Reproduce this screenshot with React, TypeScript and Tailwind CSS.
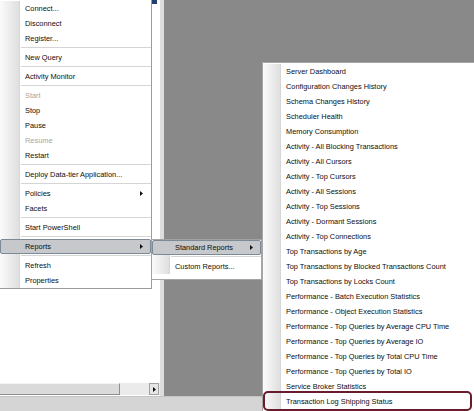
import React from 'react';

type Item = {
  label?: string;
  sep?: boolean;
  disabled?: boolean;
  sub?: boolean;
  active?: boolean;
};

const SEP: Item = { sep: true };

const serverMenu: Item[] = [
  { label: 'Connect...' },
  { label: 'Disconnect' },
  { label: 'Register...' },
  SEP,
  { label: 'New Query' },
  SEP,
  { label: 'Activity Monitor' },
  SEP,
  { label: 'Start', disabled: true },
  { label: 'Stop' },
  { label: 'Pause' },
  { label: 'Resume', disabled: true },
  { label: 'Restart' },
  SEP,
  { label: 'Deploy Data-tier Application...' },
  SEP,
  { label: 'Policies', sub: true },
  { label: 'Facets' },
  SEP,
  { label: 'Start PowerShell' },
  SEP,
  { label: 'Reports', sub: true, active: true },
  SEP,
  { label: 'Refresh' },
  { label: 'Properties' },
];

const reportsMenu: Item[] = [
  { label: 'Standard Reports', sub: true, active: true },
  SEP,
  { label: 'Custom Reports...' },
];

const standardReports: string[] = [
  'Server Dashboard',
  'Configuration Changes History',
  'Schema Changes History',
  'Scheduler Health',
  'Memory Consumption',
  'Activity - All Blocking Transactions',
  'Activity - All Cursors',
  'Activity - Top Cursors',
  'Activity - All Sessions',
  'Activity - Top Sessions',
  'Activity - Dormant Sessions',
  'Activity - Top Connections',
  'Top Transactions by Age',
  'Top Transactions by Blocked Transactions Count',
  'Top Transactions by Locks Count',
  'Performance - Batch Execution Statistics',
  'Performance - Object Execution Statistics',
  'Performance - Top Queries by Average CPU Time',
  'Performance - Top Queries by Average IO',
  'Performance - Top Queries by Total CPU Time',
  'Performance - Top Queries by Total IO',
  'Service Broker Statistics',
  'Transaction Log Shipping Status',
];

const Arrow = () => (
  <svg width="3" height="5" viewBox="0 0 3 5" className="shrink-0">
    <path d="M0 0L3 2.5L0 5Z" fill="#111" />
  </svg>
);

interface RowProps {
  item: Item;
  gutter: string;
}

const MenuRow: React.FC<RowProps> = ({ item, gutter }) => {
  if (item.sep) {
    return (
      <div className="flex h-[4px]">
        <div className={`${gutter} self-stretch bg-linear-to-r from-[#fbfbfb] to-[#dfdfdf] border-r border-[#d6d6d6]`} />
        <div className="flex-1 flex flex-col justify-center pl-[1px]">
          <div className="h-px bg-[#d5d5d5]" />
          <div className="h-px bg-white" />
        </div>
      </div>
    );
  }

  if (item.active) {
    return (
      <div className="flex items-center h-[15px] bg-[#c6c8cb] border border-[#7c8997] rounded-[2px]">
        <div className={`${gutter} self-stretch`} />
        <span className="pl-[4px] whitespace-nowrap">{item.label}</span>
        <span className="ml-auto mr-[7px]">
          <Arrow />
        </span>
      </div>
    );
  }

  return (
    <div className="flex items-center h-[15px]">
      <div className={`${gutter} self-stretch bg-linear-to-r from-[#fbfbfb] to-[#dfdfdf] border-r border-[#d6d6d6]`} />
      <span className={`pl-[5px] whitespace-nowrap ${item.disabled ? 'text-[#a5a5a5]' : ''}`}>{item.label}</span>
      {item.sub && (
        <span className="ml-auto mr-[8px]">
          <Arrow />
        </span>
      )}
    </div>
  );
};

const HScrollbar = () => (
  <div className="flex h-[12px] bg-[#ebebeb]">
    <div className="w-[120px] bg-[#dadada] border-r border-b border-[#8f8f8f] border-t border-t-[#f4f4f4]" />
    <div className="flex-1" />
    <div className="w-[10px] flex items-center justify-center bg-[#e6e6e6] border border-[#a3a3a3]">
      <Arrow />
    </div>
    <div className="w-[1px]" />
  </div>
);

export default function App() {
  return (
    <div className="relative w-[474px] h-[411px] overflow-hidden flex flex-col bg-[#8a8a8a] font-['Liberation_Sans',Arial,sans-serif] text-[7.4px] leading-none text-[#0e0e0e]">
      {/* background: object explorer panel, splitter, document area */}
      <div className="flex flex-1 min-h-0">
        <div className="w-[160px] flex flex-col bg-white">
          <div className="flex-1" />
          <HScrollbar />
          <div className="h-[1px]" />
        </div>
        <div className="w-[4px] bg-[#dddddd]" />
        <div className="flex-1 bg-[#898989]" />
      </div>
      <div className="h-[15px] bg-[#d5d5d5] border-t border-[#c4c4c4]" />

      {/* selected tree node peeking out */}
      <div className="absolute left-[152px] top-0 w-[5px] h-[4px] bg-[#243f6f]" />

      {/* server context menu */}
      <div className="absolute left-0 top-0 w-[152px] bg-white border-r border-b border-[#9b9b9b] pt-[1px]">
        {serverMenu.map((item, i) => (
          <MenuRow key={i} item={item} gutter="w-[20px]" />
        ))}
      </div>

      {/* reports submenu */}
      <div className="absolute left-[151px] top-[239px] w-[111px] h-[41px] bg-white border border-[#a3a3a3]">
        {reportsMenu.map((item, i) => (
          <MenuRow key={i} item={item} gutter="w-[18px]" />
        ))}
      </div>

      {/* standard reports submenu */}
      <div className="absolute left-[262px] top-[62px] w-[216px] h-[360px] bg-white border border-[#a6a6a6] pt-[1px]">
        {standardReports.map((label) => (
          <MenuRow key={label} item={{ label }} gutter="w-[18px]" />
        ))}
      </div>

      {/* highlight ring */}
      <div className="absolute left-[263px] top-[391px] w-[209px] h-[20px] border-2 border-[#681c2c] rounded-[5px]" />
    </div>
  );
}
